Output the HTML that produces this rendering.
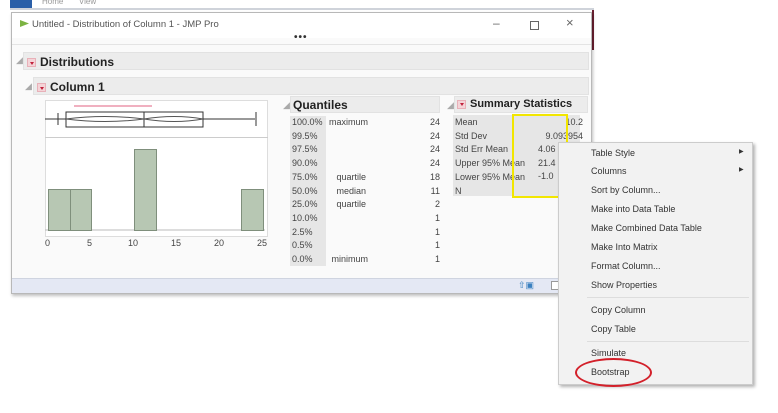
<!DOCTYPE html>
<html><head><style>
*{margin:0;padding:0;box-sizing:border-box}
body{width:778px;height:413px;background:#fff;position:relative;overflow:hidden;font-family:"Liberation Sans",sans-serif;color:#333}
.a{position:absolute}
.t{font-size:9px;color:#444;white-space:nowrap}
.hdr{background:#ececec;border:1px solid #e2e2e2;font-weight:bold;font-size:12px;color:#222;white-space:nowrap;overflow:hidden}
.tri{display:inline-block;width:9px;height:9px;background:#f4d4d8;border:1px solid #e8b0b8;vertical-align:middle;position:relative;margin-right:4px}
.tri:after{content:"";position:absolute;left:1.5px;top:2.5px;border-left:2.5px solid transparent;border-right:2.5px solid transparent;border-top:3px solid #c0203a}
.m{position:absolute;left:32px;font-size:9px;color:#333}
.bar{position:absolute;background:#b7c7b3;border:1px solid #7f8f7c}
</style></head><body>
<div class="a" style="left:10px;top:0;width:22px;height:8px;background:#2a5fa8"></div>
<div class="a t" style="left:42px;top:-3px;color:#999;font-size:8px">Home &nbsp;&nbsp;&nbsp;&nbsp;&nbsp; View</div>
<div class="a" style="left:10px;top:8px;width:584px;height:2px;background:#cfd3da"></div>
<div class="a" style="left:592px;top:10px;width:2px;height:40px;background:#6a2030"></div>
<div class="a" style="left:11px;top:12px;width:581px;height:282px;background:#fafafa;border:1px solid #b8b8b8;box-shadow:1px 2px 3px rgba(0,0,0,.25)"></div>
<div class="a" style="left:12px;top:13px;width:579px;height:25px;background:#fff"></div>
<div class="a" style="left:20px;top:20px;width:9px;height:7px;background:#7cb342;clip-path:polygon(0 0,100% 50%,0 100%)"></div>
<div class="a" style="left:32px;top:19px;font-size:9.5px;color:#555">Untitled - Distribution of Column 1 - JMP Pro</div>
<div class="a" style="left:493px;top:16px;font-size:12px;color:#666">–</div>
<div class="a" style="left:530px;top:21px;width:9px;height:9px;border:1px solid #666"></div>
<div class="a" style="left:566px;top:15px;font-size:13px;color:#666">×</div>
<div class="a" style="left:294px;top:32px;font-size:10px;color:#333;letter-spacing:1px;font-weight:bold">•••</div>
<div class="a" style="left:12px;top:44px;width:579px;height:1px;background:#e4e4e4"></div>
<div class="a t" style="left:16px;top:55px;color:#aaa">◢</div>
<div class="a hdr" style="left:23px;top:52px;width:566px;height:18px;padding:2px 3px"><span class="tri"></span>Distributions</div>
<div class="a t" style="left:25px;top:81px;color:#aaa">◢</div>
<div class="a hdr" style="left:33px;top:77px;width:556px;height:18px;padding:2px 3px"><span class="tri"></span>Column 1</div>
<div class="a" style="left:45px;top:100px;width:223px;height:137px;border:1px solid #ddd;background:#fff"></div>
<div class="a" style="left:45px;top:137px;width:223px;height:1px;background:#ccc"></div>
<svg class="a" style="left:45px;top:100px" width="223" height="140">
<line x1="29" y1="6" x2="107" y2="6" stroke="#e06080" stroke-width="1"/>
<line x1="0" y1="19" x2="210" y2="19" stroke="#333" stroke-width="1"/>
<rect x="21" y="12" width="137" height="15" fill="#fff" stroke="#333"/>
<line x1="99" y1="12" x2="99" y2="27" stroke="#333"/>
<path d="M21 19 Q60 14 99 19 Q130 24 158 19" fill="none" stroke="#555"/>
<path d="M21 19 Q60 24 99 19 Q130 14 158 19" fill="none" stroke="#555"/>
<line x1="13" y1="13" x2="13" y2="25" stroke="#333"/><line x1="211" y1="12" x2="211" y2="26" stroke="#333"/>
<line x1="0" y1="130" x2="220" y2="130" stroke="#bbb"/>
</svg>
<div class="bar" style="left:48px;top:189px;width:23px;height:42px"></div>
<div class="bar" style="left:70px;top:189px;width:22px;height:42px"></div>
<div class="bar" style="left:134px;top:149px;width:23px;height:82px"></div>
<div class="bar" style="left:241px;top:189px;width:23px;height:42px"></div>
<div class="a t" style="left:45px;top:238px">0</div>
<div class="a t" style="left:87px;top:238px">5</div>
<div class="a t" style="left:128px;top:238px">10</div>
<div class="a t" style="left:171px;top:238px">15</div>
<div class="a t" style="left:214px;top:238px">20</div>
<div class="a t" style="left:257px;top:238px">25</div>
<div class="a t" style="left:283px;top:100px;color:#aaa">◢</div>
<div class="a hdr" style="left:290px;top:96px;width:150px;height:17px;padding:1px 2px">Quantiles</div>
<div class="a" style="left:290px;top:116px;width:36px;height:150px;background:#e6e6e6"></div>
<div class="a t" style="left:292px;top:116px;line-height:13.7px">100.0%<br>99.5%<br>97.5%<br>90.0%<br>75.0%<br>50.0%<br>25.0%<br>10.0%<br>2.5%<br>0.5%<br>0.0%</div>
<div class="a t" style="left:329px;top:116px;line-height:13.7px">maximum<br><br><br><br>&nbsp;&nbsp;&nbsp;quartile<br>&nbsp;&nbsp;&nbsp;median<br>&nbsp;&nbsp;&nbsp;quartile<br><br><br><br>&nbsp;minimum</div>
<div class="a t" style="left:420px;width:20px;text-align:right;top:116px;line-height:13.7px">24<br>24<br>24<br>24<br>18<br>11<br>2<br>1<br>1<br>1<br>1</div>
<div class="a t" style="left:447px;top:100px;color:#aaa">◢</div>
<div class="a hdr" style="left:454px;top:96px;width:134px;height:17px;padding:1px 2px;font-size:11px"><span class="tri"></span>Summary Statistics</div>
<div class="a" style="left:453px;top:115px;width:127px;height:81px;background:#e6e6e6"></div>
<div class="a t" style="left:455px;top:116px;line-height:13.7px">Mean<br>Std Dev<br>Std Err Mean<br>Upper 95% Mean<br>Lower 95% Mean<br>N</div>
<div class="a t" style="left:530px;width:53px;text-align:right;top:116px;line-height:13.7px">10.2<br>9.093954</div>
<div class="a t" style="left:538px;top:143px;line-height:13.7px">4.06<br>21.4<br>-1.0</div>
<div class="a" style="left:512px;top:114px;width:56px;height:84px;border:2px solid #f2e600"></div>
<div class="a" style="left:12px;top:278px;width:579px;height:15px;background:#e4e8f4;border-top:1px solid #cfd4e0"></div>
<div class="a t" style="left:518px;top:280px;color:#3a80c0">⇧▣</div>
<div class="a" style="left:551px;top:281px;width:9px;height:9px;border:1px solid #999;background:#fff"></div>
<div class="a" style="left:558px;top:142px;width:195px;height:243px;background:#f2f2f2;border:1px solid #ccc;box-shadow:2px 2px 3px rgba(0,0,0,.3)">
<div class="m" style="top:5px">Table Style</div><div class="m" style="left:180px;top:5px;font-size:6px">▶</div>
<div class="m" style="top:23px">Columns</div><div class="m" style="left:180px;top:23px;font-size:6px">▶</div>
<div class="m" style="top:42px">Sort by Column...</div>
<div class="m" style="top:61px">Make into Data Table</div>
<div class="m" style="top:80px">Make Combined Data Table</div>
<div class="m" style="top:99px">Make Into Matrix</div>
<div class="m" style="top:118px">Format Column...</div>
<div class="m" style="top:137px">Show Properties</div>
<div class="a" style="left:28px;top:154px;width:162px;height:1px;background:#ddd"></div>
<div class="m" style="top:162px">Copy Column</div>
<div class="m" style="top:181px">Copy Table</div>
<div class="a" style="left:28px;top:198px;width:162px;height:1px;background:#ddd"></div>
<div class="m" style="top:205px">Simulate</div>
<div class="m" style="top:224px">Bootstrap</div>
</div>
<div class="a" style="left:575px;top:358px;width:77px;height:29px;border:2px solid #d3202a;border-radius:50%"></div>
</body></html>
